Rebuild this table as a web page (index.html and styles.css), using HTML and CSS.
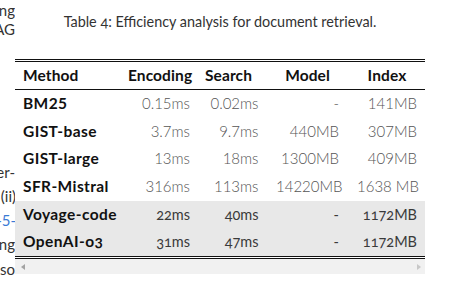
FILE: index.html
```html
<!DOCTYPE html>
<html lang="en">
<head>
<meta charset="utf-8">
<title>Table 4: Efficiency analysis</title>
<link rel="stylesheet" href="styles.css">
</head>
<body>
<div class="page">
  <div class="margin-text">
    <div class="top-lines">
      <div class="ln"><span>using</span></div>
      <div class="ln"><span>RAG</span></div>
    </div>
    <div class="bottom-lines">
      <div class="ln"><span>larger-</span></div>
      <div class="ln clip-a"><span>(ii)</span></div>
      <div class="ln clip-b"><span class="link">v1-5-</span></div>
      <div class="ln"><span>using</span></div>
      <div class="ln"><span>also</span></div>
    </div>
  </div>
  <figure class="table-figure">
    <div class="caption">Table <span class="os">4</span>: Efficiency analysis for document retrieval.</div>
    <div class="table-scroll">
      <table class="eff">
        <colgroup>
          <col class="c-method">
          <col class="c-enc">
          <col class="c-search">
          <col class="c-model">
          <col class="c-index">
        </colgroup>
        <thead>
          <tr>
            <th class="method">Method</th>
            <th class="enc">Encoding</th>
            <th class="search">Search</th>
            <th class="model">Model</th>
            <th class="index">Index</th>
          </tr>
        </thead>
        <tbody>
          <tr>
            <td class="method">BM25</td>
            <td class="enc">0.15ms</td>
            <td class="search">0.02ms</td>
            <td class="model">-</td>
            <td class="index">141MB</td>
          </tr>
          <tr>
            <td class="method">GIST-base</td>
            <td class="enc">3.7ms</td>
            <td class="search">9.7ms</td>
            <td class="model">440MB</td>
            <td class="index">307MB</td>
          </tr>
          <tr>
            <td class="method">GIST-large</td>
            <td class="enc">13ms</td>
            <td class="search">18ms</td>
            <td class="model">1300MB</td>
            <td class="index">409MB</td>
          </tr>
          <tr>
            <td class="method">SFR-Mistral</td>
            <td class="enc">316ms</td>
            <td class="search">113ms</td>
            <td class="model">14220MB</td>
            <td class="index">1638 MB</td>
          </tr>
          <tr class="api">
            <td class="method">Voyage-code</td>
            <td class="enc">22ms</td>
            <td class="search">40ms</td>
            <td class="model">-</td>
            <td class="index">1172MB</td>
          </tr>
          <tr class="api">
            <td class="method">OpenAI-o3</td>
            <td class="enc">31ms</td>
            <td class="search">47ms</td>
            <td class="model">-</td>
            <td class="index">1172MB</td>
          </tr>
        </tbody>
      </table>
      <div class="scrollbar">
        <span class="arrow arrow-left"></span>
        <span class="arrow arrow-right"></span>
      </div>
    </div>
  </figure>
</div>
</body>
</html>
```
FILE: styles.css
```css
html, body {
  margin: 0;
  padding: 0;
  background: #ffffff;
}

body {
  font-family: Lato, "Open Sans", "DejaVu Sans", sans-serif;
  color: #1a1a1a;
}

.page {
  display: flex;
  align-items: flex-start;
  width: 454px;
  height: 293px;
  overflow: hidden;
}

/* clipped text of the neighbouring column */
.margin-text {
  width: 15px;
  flex: none;
  overflow: hidden;
  font-size: 15px;
  color: #333;
}

.top-lines {
  padding-top: 0.5px;
}

.top-lines .ln {
  height: 19.5px;
  line-height: 19.5px;
}

.bottom-lines {
  margin-top: 120px;
}

.bottom-lines .ln {
  height: 24.3px;
  line-height: 24.3px;
}

.ln {
  display: flex;
  justify-content: flex-end;
  white-space: nowrap;
}

.ln span {
  flex: none;
}

.ln.clip-a span {
  margin-right: -1px;
}

.ln.clip-b span {
  margin-right: -1px;
}

.link {
  color: #3a7bd5;
}

/* figure */
.table-figure {
  margin: 0;
  width: 410px;
  flex: none;
}

.caption {
  padding-top: 12px;
  line-height: 20px;
  margin-bottom: 27px;
  font-size: 14.4px;
  color: #333;
  text-align: center;
}

.os {
  font-variant-numeric: oldstyle-nums;
}

.table-scroll {
  width: 410px;
}

.eff {
  width: 410px;
  table-layout: fixed;
  border-collapse: separate;
  border-spacing: 0;
  border-top: 3px double #111;
  border-bottom: 3px double #111;
  font-size: 15px;
}

.c-method { width: 109px; }
.c-enc { width: 70px; }
.c-search { width: 69px; }
.c-model { width: 80px; }
.c-index { width: 82px; }

.eff th {
  font-weight: 700;
  font-size: 15.5px;
  letter-spacing: 0.1px;
  color: #111;
  line-height: 27px;
  padding-top: 0;
  padding-bottom: 0;
  text-align: center;
  border-bottom: 1px solid #111;
  white-space: nowrap;
}

.eff td {
  line-height: 27.67px;
  padding-top: 0;
  padding-bottom: 0;
  text-align: right;
  font-weight: 300;
  color: #555;
  white-space: nowrap;
}

.eff .method {
  padding-left: 8px;
  padding-right: 0;
  text-align: left;
}

.eff td.method {
  font-weight: 700;
  font-size: 15.5px;
  letter-spacing: 0.4px;
  color: #111;
}

.eff .enc { padding-left: 4px; padding-right: 4px; }
.eff .search { padding-left: 4.5px; padding-right: 4.5px; }
.eff .model { padding-left: 13px; padding-right: 4px; }
.eff .index { padding-left: 14px; padding-right: 8px; }

.eff tr.api td {
  background: #e8e8e8;
  font-weight: 400;
  font-size: 14.5px;
  color: #3a3a3a;
  font-variant-numeric: oldstyle-nums;
}

.eff tr.api td.method {
  font-weight: 700;
  font-size: 15.5px;
  color: #111;
}

/* horizontal scrollbar track */
.scrollbar {
  height: 15px;
  background: #f1f1f1;
  display: flex;
  align-items: center;
  justify-content: space-between;
  padding: 0 4px 0 6px;
}

.arrow {
  width: 0;
  height: 0;
  border-top: 3.5px solid transparent;
  border-bottom: 3.5px solid transparent;
}

.arrow-left {
  border-right: 4px solid #a3a3a3;
}

.arrow-right {
  border-left: 4px solid #c8c8c8;
}
```
